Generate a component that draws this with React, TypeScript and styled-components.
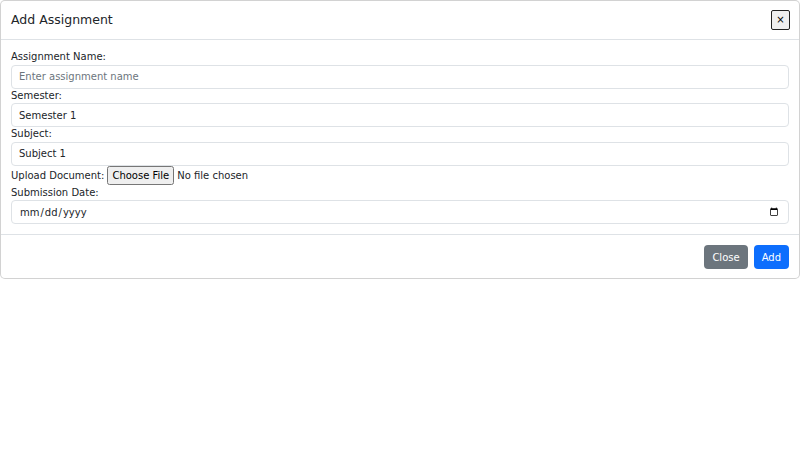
import styled, { createGlobalStyle } from "styled-components";

const GlobalStyle = createGlobalStyle`
  html, body {
    margin: 0;
    padding: 0;
    background: #fff;
  }
  body {
    font-family: "DejaVu Sans", sans-serif;
    color: #212529;
  }
`;

// == STYLES ==
const Modal = styled.div`
  width: 800px;
  box-sizing: border-box;
  border: 1px solid rgba(0, 0, 0, 0.175);
  border-radius: 5px;
  background: #fff;
`;

const Header = styled.div`
  display: flex;
  align-items: center;
  justify-content: space-between;
  height: 38px;
  padding: 0 9px 0 10px;
  border-bottom: 1px solid #dee2e6;
`;

const Title = styled.h5`
  margin: 0;
  font-size: 12.5px;
  font-weight: 400;
  line-height: 1;
`;

const CloseX = styled.button`
  width: 19px;
  height: 20px;
  padding: 0;
  font-family: "DejaVu Sans", sans-serif;
  font-size: 10px;
  line-height: 1;
  color: #000;
  background: #efefef;
  border: 1.5px solid #222;
  border-radius: 2px;
`;

const Body = styled.form`
  display: flex;
  flex-direction: column;
  padding: 10px;
`;

const Label = styled.label`
  display: block;
  font-size: 10px;
  line-height: 14.5px;
`;

const Field = styled.input`
  box-sizing: border-box;
  width: 100%;
  height: 24px;
  padding: 0 7px;
  font-family: "DejaVu Sans", sans-serif;
  font-size: 10px;
  color: #212529;
  border: 1px solid #dee2e6;
  border-radius: 4px;
  outline: none;
  &::placeholder {
    color: #6c757d;
  }
`;

const Select = styled.select`
  box-sizing: border-box;
  width: 100%;
  height: 24px;
  padding: 0 7px;
  font-family: "DejaVu Sans", sans-serif;
  font-size: 10px;
  color: #212529;
  background: #fff;
  border: 1px solid #dee2e6;
  border-radius: 4px;
  appearance: none;
  outline: none;
`;

const UploadRow = styled.div`
  display: flex;
  align-items: center;
  gap: 3px;
  height: 20px;
  font-size: 10px;
`;

const FileInput = styled.input`
  font-family: "DejaVu Sans", sans-serif;
  font-size: 10px;
  &::file-selector-button {
    font-family: "DejaVu Sans", sans-serif;
    font-size: 10px;
    height: 19px;
    padding: 0 3px;
    margin-right: 3px;
  }
`;

const Footer = styled.div`
  display: flex;
  justify-content: flex-end;
  gap: 6px;
  padding: 10px 10px 9px;
  border-top: 1px solid #dee2e6;
`;

const Button = styled.button<{ $variant: "secondary" | "primary" }>`
  height: 24px;
  padding: 0 8px;
  font-family: "DejaVu Sans", sans-serif;
  font-size: 10px;
  color: #fff;
  border: none;
  border-radius: 4px;
  background: ${(p) => (p.$variant === "primary" ? "#0d6efd" : "#6c757d")};
`;

export default function App() {
  return (
    <>
      <GlobalStyle />
      <Modal>
        <Header>
          <Title>Add Assignment</Title>
          <CloseX type="button">×</CloseX>
        </Header>
        <Body onSubmit={(e) => e.preventDefault()}>
          <Label htmlFor="name">Assignment Name:</Label>
          <Field id="name" type="text" placeholder="Enter assignment name" />
          <Label htmlFor="semester">Semester:</Label>
          <Select id="semester" defaultValue="1">
            <option value="1">Semester 1</option>
          </Select>
          <Label htmlFor="subject">Subject:</Label>
          <Select id="subject" defaultValue="1">
            <option value="1">Subject 1</option>
          </Select>
          <UploadRow>
            <label htmlFor="doc">Upload Document:</label>
            <FileInput id="doc" type="file" />
          </UploadRow>
          <Label htmlFor="date">Submission Date:</Label>
          <Field id="date" type="date" />
        </Body>
        <Footer>
          <Button $variant="secondary" type="button">Close</Button>
          <Button $variant="primary" type="button">Add</Button>
        </Footer>
      </Modal>
    </>
  );
}
